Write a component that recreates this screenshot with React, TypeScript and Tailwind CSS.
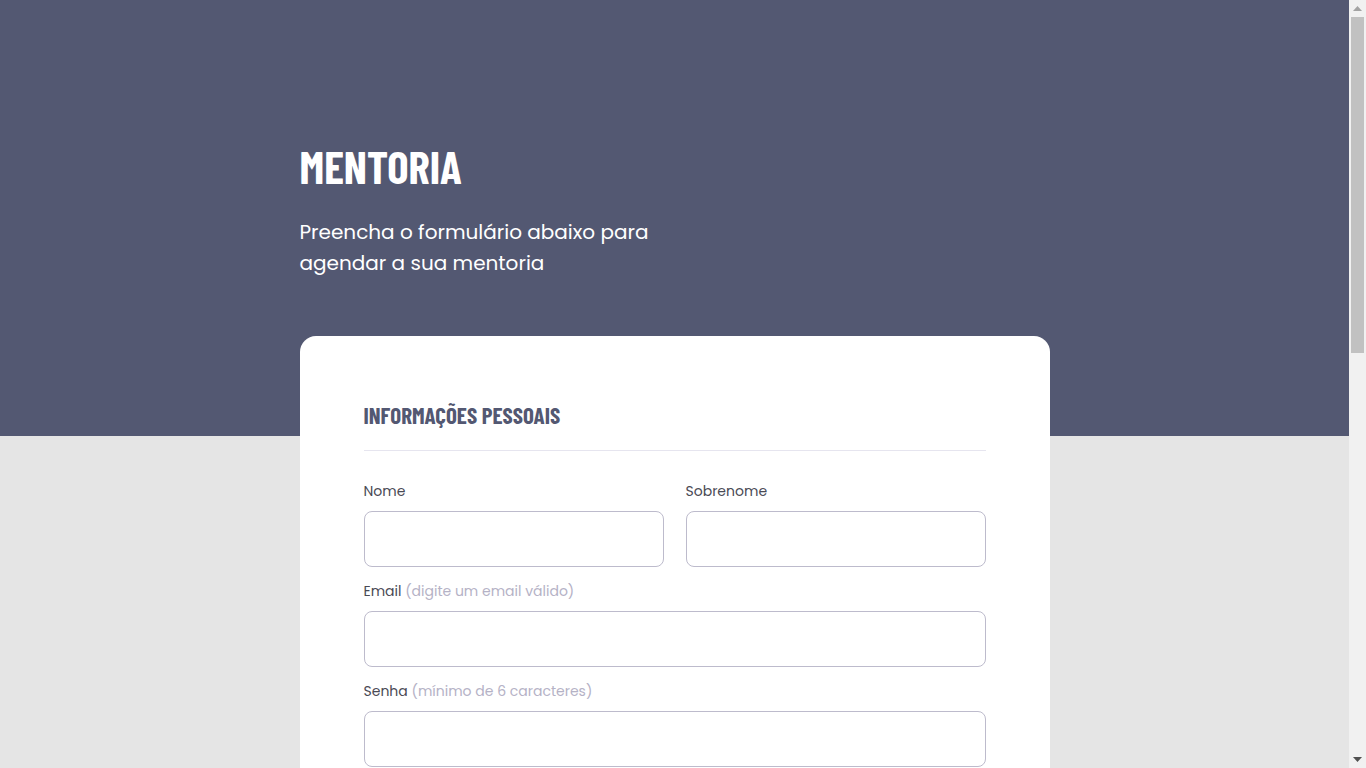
import React from "react";

const body = { fontFamily: "Poppins, Inter, 'Noto Sans', sans-serif" };
const display = { fontFamily: "'Barlow Condensed', 'Liberation Sans Narrow', 'DejaVu Sans Condensed', sans-serif" };

function Field({ label, hint }: { label: string; hint?: string }) {
  return (
    <div className="flex flex-col">
      <label className="text-[14px] leading-[20px] text-[#4a4a55] mb-[10px]">
        {label}
        {hint && <span className="text-[#b5b2c6]"> {hint}</span>}
      </label>
      <input className="h-[56px] w-full rounded-[8px] border border-[#bdbbcc] bg-white px-4 outline-none" />
    </div>
  );
}

function Section({ title, children }: { title: string; children: React.ReactNode }) {
  return (
    <section className="mb-[50px]">
      <h2 style={display} className="text-[23px] leading-[30px] font-bold uppercase text-[#535872] pb-[20px] border-b border-[#e6e5ef]">
        {title}
      </h2>
      <div className="mt-[30px] flex flex-col gap-[14px]">{children}</div>
    </section>
  );
}

// Classic desktop scrollbar drawn along the right edge of the viewport
function Scrollbar() {
  return (
    <div className="fixed top-0 right-0 h-screen w-[17px] bg-[#f1f1f1] flex flex-col">
      <div className="h-[17px] flex items-center justify-center">
        <svg width="9" height="5" viewBox="0 0 9 5"><path d="M0 5 L4.5 0 L9 5 Z" fill="#a3a3a3" /></svg>
      </div>
      <div className="flex-1 px-[2px]">
        <div className="h-[336px] bg-[#c1c1c1]" />
      </div>
      <div className="h-[17px] flex items-center justify-center">
        <svg width="9" height="5" viewBox="0 0 9 5"><path d="M0 0 L9 0 L4.5 5 Z" fill="#505050" /></svg>
      </div>
    </div>
  );
}

export default function App() {
  return (
    <div style={body} className="min-h-screen bg-[#e5e5e5] pr-[17px]">
      <header className="bg-[#535872] h-[436px]">
        <div className="w-[750px] mx-auto pt-[139px]">
          <h1 style={display} className="text-white text-[45px] leading-[54px] font-bold uppercase">Mentoria</h1>
          <p className="mt-[24px] text-white text-[20px] leading-[31px] w-[360px]">
            Preencha o formulário abaixo para agendar a sua mentoria
          </p>
        </div>
      </header>
      <main className="w-[750px] mx-auto -mt-[100px] pb-[80px]">
        <div className="bg-white rounded-[16px] px-[64px] pt-[64px] pb-[64px]">
          <Section title="Informações pessoais">
            <div className="grid grid-cols-2 gap-[22px]">
              <Field label="Nome" />
              <Field label="Sobrenome" />
            </div>
            <Field label="Email" hint="(digite um email válido)" />
            <Field label="Senha" hint="(mínimo de 6 caracteres)" />
            <Field label="Confirme a senha" />
            <div className="grid grid-cols-2 gap-[22px]">
              <Field label="Data de nascimento" />
              <Field label="Telefone" />
            </div>
          </Section>
          <Section title="Informações de mentoria">
            <Field label="Área de interesse" />
            <div className="grid grid-cols-2 gap-[22px]">
              <Field label="Data" />
              <Field label="Horário" />
            </div>
            <Field label="Objetivo da mentoria" />
          </Section>
          <button className="w-full h-[56px] rounded-[8px] bg-[#535872] text-white text-[16px] font-semibold">
            Agendar mentoria
          </button>
        </div>
      </main>
      <Scrollbar />
    </div>
  );
}
